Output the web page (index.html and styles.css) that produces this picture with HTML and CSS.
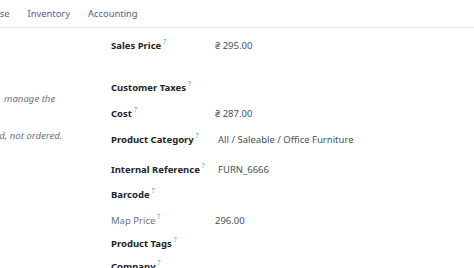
FILE: index.html
```html
<!DOCTYPE html>
<html lang="en">
<head>
    <meta charset="UTF-8">
    <meta name="viewport" content="width=device-width, initial-scale=1.0">
    <title>Product - General Information</title>
    <link rel="stylesheet" href="styles.css">
</head>
<body>
    <!-- Notebook tabs -->
    <div class="tabs">
        <span class="tab tab-cut">Purchase</span>
        <span class="tab">Inventory</span>
        <span class="tab">Accounting</span>
    </div>

    <div class="sheet">
        <!-- Left group (cut off) -->
        <div class="left-group">
            <p class="hint hint-one">manage the</p>
            <p class="hint hint-two">received, not ordered.</p>
        </div>

        <!-- Right group -->
        <div class="fields">
            <div class="row row-price">
                <label class="lbl">Sales Price<sup>?</sup></label>
                <span class="val">₴ 295.00</span>
            </div>
            <div class="row">
                <label class="lbl">Customer Taxes<sup>?</sup></label>
                <span class="val"></span>
            </div>
            <div class="row">
                <label class="lbl">Cost<sup>?</sup></label>
                <span class="val">₴ 287.00</span>
            </div>
            <div class="row">
                <label class="lbl">Product Category<sup>?</sup></label>
                <span class="val val-input">All / Saleable / Office Furniture</span>
            </div>
            <div class="row row-ref">
                <label class="lbl">Internal Reference<sup>?</sup></label>
                <span class="val val-input">FURN_6666</span>
            </div>
            <div class="row row-short">
                <label class="lbl">Barcode<sup>?</sup></label>
                <span class="val"></span>
            </div>
            <div class="row">
                <label class="lbl lbl-light">Map Price<sup>?</sup></label>
                <span class="val">296.00</span>
            </div>
            <div class="row row-tags">
                <label class="lbl">Product Tags<sup>?</sup></label>
                <span class="val"></span>
            </div>
            <div class="row">
                <label class="lbl">Company<sup>?</sup></label>
                <span class="val"></span>
            </div>
        </div>
    </div>
</body>
</html>
```

FILE: styles.css
```css
body {
    margin: 0;
    font-family: "Noto Sans", "Open Sans", sans-serif;
    font-size: 9.5px;
    color: #212529;
    background: #fff;
    overflow: hidden;
    height: 268px;
}
.tabs {
    display: flex;
    gap: 18px;
    height: 27px;
    align-items: center;
    border-bottom: 1px solid #e4e4e8;
}
.tab {
    color: #5e5b83;
    font-size: 9.4px;
}
.tab-cut {
    margin-left: -31px;
}
.sheet {
    display: flex;
}
.left-group {
    width: 111px;
    flex-shrink: 0;
    overflow: hidden;
}
.hint {
    margin: 0;
    font-style: italic;
    color: #6c757d;
    font-size: 9.6px;
    line-height: 14px;
    white-space: nowrap;
}
.hint-one {
    margin-top: 64px;
    padding-left: 4px;
}
.hint-two {
    margin-top: 23px;
    margin-left: -30px;
}
.fields {
    padding-top: 7px;
}
.row {
    display: grid;
    grid-template-columns: 104px 1fr;
    height: 26px;
    align-items: center;
}
.row-price {
    height: 20px;
    margin-bottom: 19px;
}
.row-ref {
    margin-top: 4px;
}
.row-short {
    height: 25px;
}
.row-tags {
    height: 20px;
}
.lbl {
    font-weight: bold;
    white-space: nowrap;
}
.lbl sup {
    font-weight: normal;
    color: #3d9fd8;
    font-size: 6.5px;
    margin-left: 2px;
    vertical-align: 5px;
    line-height: 0;
}
.lbl-light {
    font-weight: normal;
    color: #6c757d;
}
.val {
    color: #495057;
    white-space: nowrap;
}
.val-input {
    padding-left: 3px;
}
```
